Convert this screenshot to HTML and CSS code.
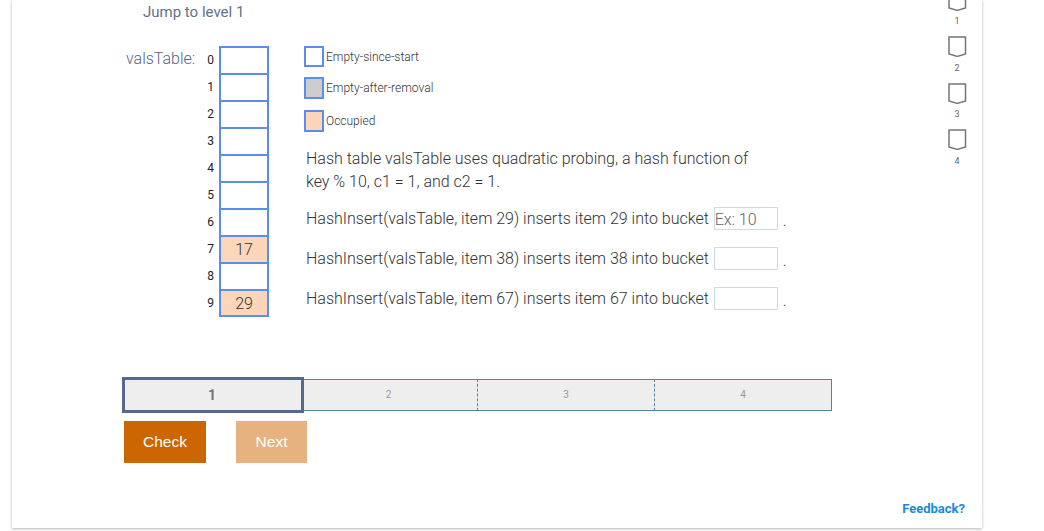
FILE: index.html
```html
<!DOCTYPE html>
<html lang="en">
<head>
<meta charset="utf-8">
<title>Hash table quadratic probing</title>
<link rel="stylesheet" href="styles.css">
</head>
<body>
<div class="card">
  <main class="main">
    <a class="jump">Jump to level 1</a>
    <div class="activity">
      <div class="table-name">valsTable:</div>
      <div class="table">
        <div class="row"><span class="idx">0</span><span class="cell"></span></div>
        <div class="row"><span class="idx">1</span><span class="cell"></span></div>
        <div class="row"><span class="idx">2</span><span class="cell"></span></div>
        <div class="row"><span class="idx">3</span><span class="cell"></span></div>
        <div class="row"><span class="idx">4</span><span class="cell"></span></div>
        <div class="row"><span class="idx">5</span><span class="cell"></span></div>
        <div class="row"><span class="idx">6</span><span class="cell"></span></div>
        <div class="row"><span class="idx">7</span><span class="cell occupied">17</span></div>
        <div class="row"><span class="idx">8</span><span class="cell"></span></div>
        <div class="row"><span class="idx">9</span><span class="cell occupied">29</span></div>
      </div>
      <div class="side">
        <ul class="legend">
          <li class="legend-item"><span class="swatch"></span>Empty-since-start</li>
          <li class="legend-item gap-a"><span class="swatch removed"></span>Empty-after-removal</li>
          <li class="legend-item gap-b"><span class="swatch filled"></span>Occupied</li>
        </ul>
        <p class="prompt">Hash table valsTable uses quadratic probing, a hash function of<br>key % 10, c1 = 1, and c2 = 1.</p>
        <div class="question first">HashInsert(valsTable, item 29) inserts item 29 into bucket <input class="answer" placeholder="Ex: 10"><span class="dot">.</span></div>
        <div class="question">HashInsert(valsTable, item 38) inserts item 38 into bucket <input class="answer"><span class="dot">.</span></div>
        <div class="question">HashInsert(valsTable, item 67) inserts item 67 into bucket <input class="answer"><span class="dot">.</span></div>
      </div>
    </div>
    <div class="levels">
      <div class="level current">1</div>
      <div class="level l2">2</div>
      <div class="level l3">3</div>
      <div class="level l4">4</div>
    </div>
    <div class="actions">
      <button class="btn check">Check</button>
      <button class="btn next">Next</button>
    </div>
  </main>
  <aside class="progress">
    <div class="step"><svg class="shield" viewBox="0 0 19 21"><path d="M1 1H17.500V18L9.250 20.400L1 18Z"/></svg><span>1</span></div>
    <div class="step"><svg class="shield" viewBox="0 0 19 21"><path d="M1 1H17.500V18L9.250 20.400L1 18Z"/></svg><span>2</span></div>
    <div class="step"><svg class="shield" viewBox="0 0 19 21"><path d="M1 1H17.500V18L9.250 20.400L1 18Z"/></svg><span>3</span></div>
    <div class="step"><svg class="shield" viewBox="0 0 19 21"><path d="M1 1H17.500V18L9.250 20.400L1 18Z"/></svg><span>4</span></div>
  </aside>
  <a class="feedback">Feedback?</a>
</div>
</body>
</html>
```
FILE: styles.css
```css
* { box-sizing: border-box; }
html, body { margin: 0; height: 531px; overflow: hidden; background: #fff; }
body { font-family: Roboto, "Liberation Sans", sans-serif; color: #333; }
.card {
  position: relative;
  width: 970px;
  height: 528px;
  margin-left: 12px;
  padding-left: 111px;
  display: flex;
  overflow: hidden;
  background: #fff;
  box-shadow: 0 1px 3px rgba(0, 0, 0, .3);
}
.main { width: 709px; flex: none; }
.jump { display: block; margin-left: 20px; height: 46px; padding-top: 4px; line-height: 17px; font-size: 15px; color: #63708c; }
.activity { display: flex; height: 332px; }
.table-name { width: 73px; margin-left: 3px; padding-top: 3px; font-size: 16px; line-height: 19px; font-weight: 300; color: #55657d; }
.table { width: 79px; flex: none; }
.row { display: flex; height: 27px; }
.row:last-child { height: 28px; }
.idx { width: 16px; text-align: right; font-size: 12px; line-height: 29px; color: #222; margin-right: 5px; margin-left: -1px; }
.cell { width: 50px; border: 2px solid #5b8def; border-bottom-width: 0; text-align: center; font-size: 16px; font-weight: 300; line-height: 25px; }
.row:last-child .cell { border-bottom-width: 2px; }
.occupied { background: #fdd5b8; }
.side { margin-left: 26px; width: 500px; flex: none; }
.legend { list-style: none; margin: 0; padding: 0; }
.legend-item { display: flex; align-items: center; height: 21px; font-size: 12px; font-weight: 300; color: #333; gap: 2px; }
.gap-a { margin-top: 10px; height: 22px; }
.gap-b { margin-top: 11px; height: 22px; }
.swatch { width: 20px; height: 100%; border: 2px solid #5b8def; background: #fff; }
.removed { background: #ccc; }
.filled { background: #fdd5b8; }
.prompt { margin: 15px 0 0 2px; font-size: 16px; font-weight: 300; line-height: 23px; color: #333; }
.question { display: flex; align-items: center; margin: 17px 0 0 2px; height: 23px; font-size: 16px; font-weight: 300; white-space: pre; color: #333; }
.question.first { margin-top: 14px; }
.answer { width: 64px; height: 23px; margin-left: 1px; padding: 2px 1px 0 0; border: 1px solid #cfdbe0; font: 300 16px Roboto, sans-serif; outline: 0; }
.answer::placeholder { color: #666; opacity: 1; }
.dot { margin-left: 5px; padding-top: 4px; }
.levels { display: flex; height: 34px; width: 709px; background: #fff; }
.level { margin: 1px 0; background: #eee; border: solid #5a7fa8; border-width: 1px 0; font-size: 10px; line-height: 30px; text-align: center; color: #999; }
.current { position: relative; z-index: 1; width: 182px; margin: -1px -1px -1px -1px; padding-right: 2px; border: 3px solid #56698a; font-size: 14px; font-weight: 700; line-height: 30px; color: #777; }
.l2 { width: 175px; padding-right: 3px; border-right: 1px dashed #5a7fa8; }
.l3 { width: 177px; border-right: 1px dashed #5a7fa8; }
.l4 { width: 177px; border-right: 1px solid #5a7fa8; }
.actions { display: flex; gap: 30px; margin: 9px 0 0 1px; }
.btn { height: 42px; border: 0; padding: 0; font: 400 15.500px "Liberation Sans", Arial, sans-serif; color: #fff; background: #c60; }
.check { width: 82px; }
.next { width: 71px; background: #e6b380; }
.progress { flex: none; margin: -10.500px 0 0 116px; width: 19px; display: flex; flex-direction: column; align-items: center; }
.step { height: 46.500px; display: flex; flex-direction: column; align-items: center; }
.step span { font-size: 9px; line-height: 12px; margin-top: 4.500px; margin-right: 1px; color: #666; }
.shield { width: 19px; height: 21px; display: block; flex: none; }
.shield path { fill: #fff; stroke: #757575; stroke-width: 1.500; }
.feedback { position: absolute; right: 17px; bottom: 11px; font-size: 13px; font-weight: 700; line-height: 16px; color: #1a8ad8; }
```
